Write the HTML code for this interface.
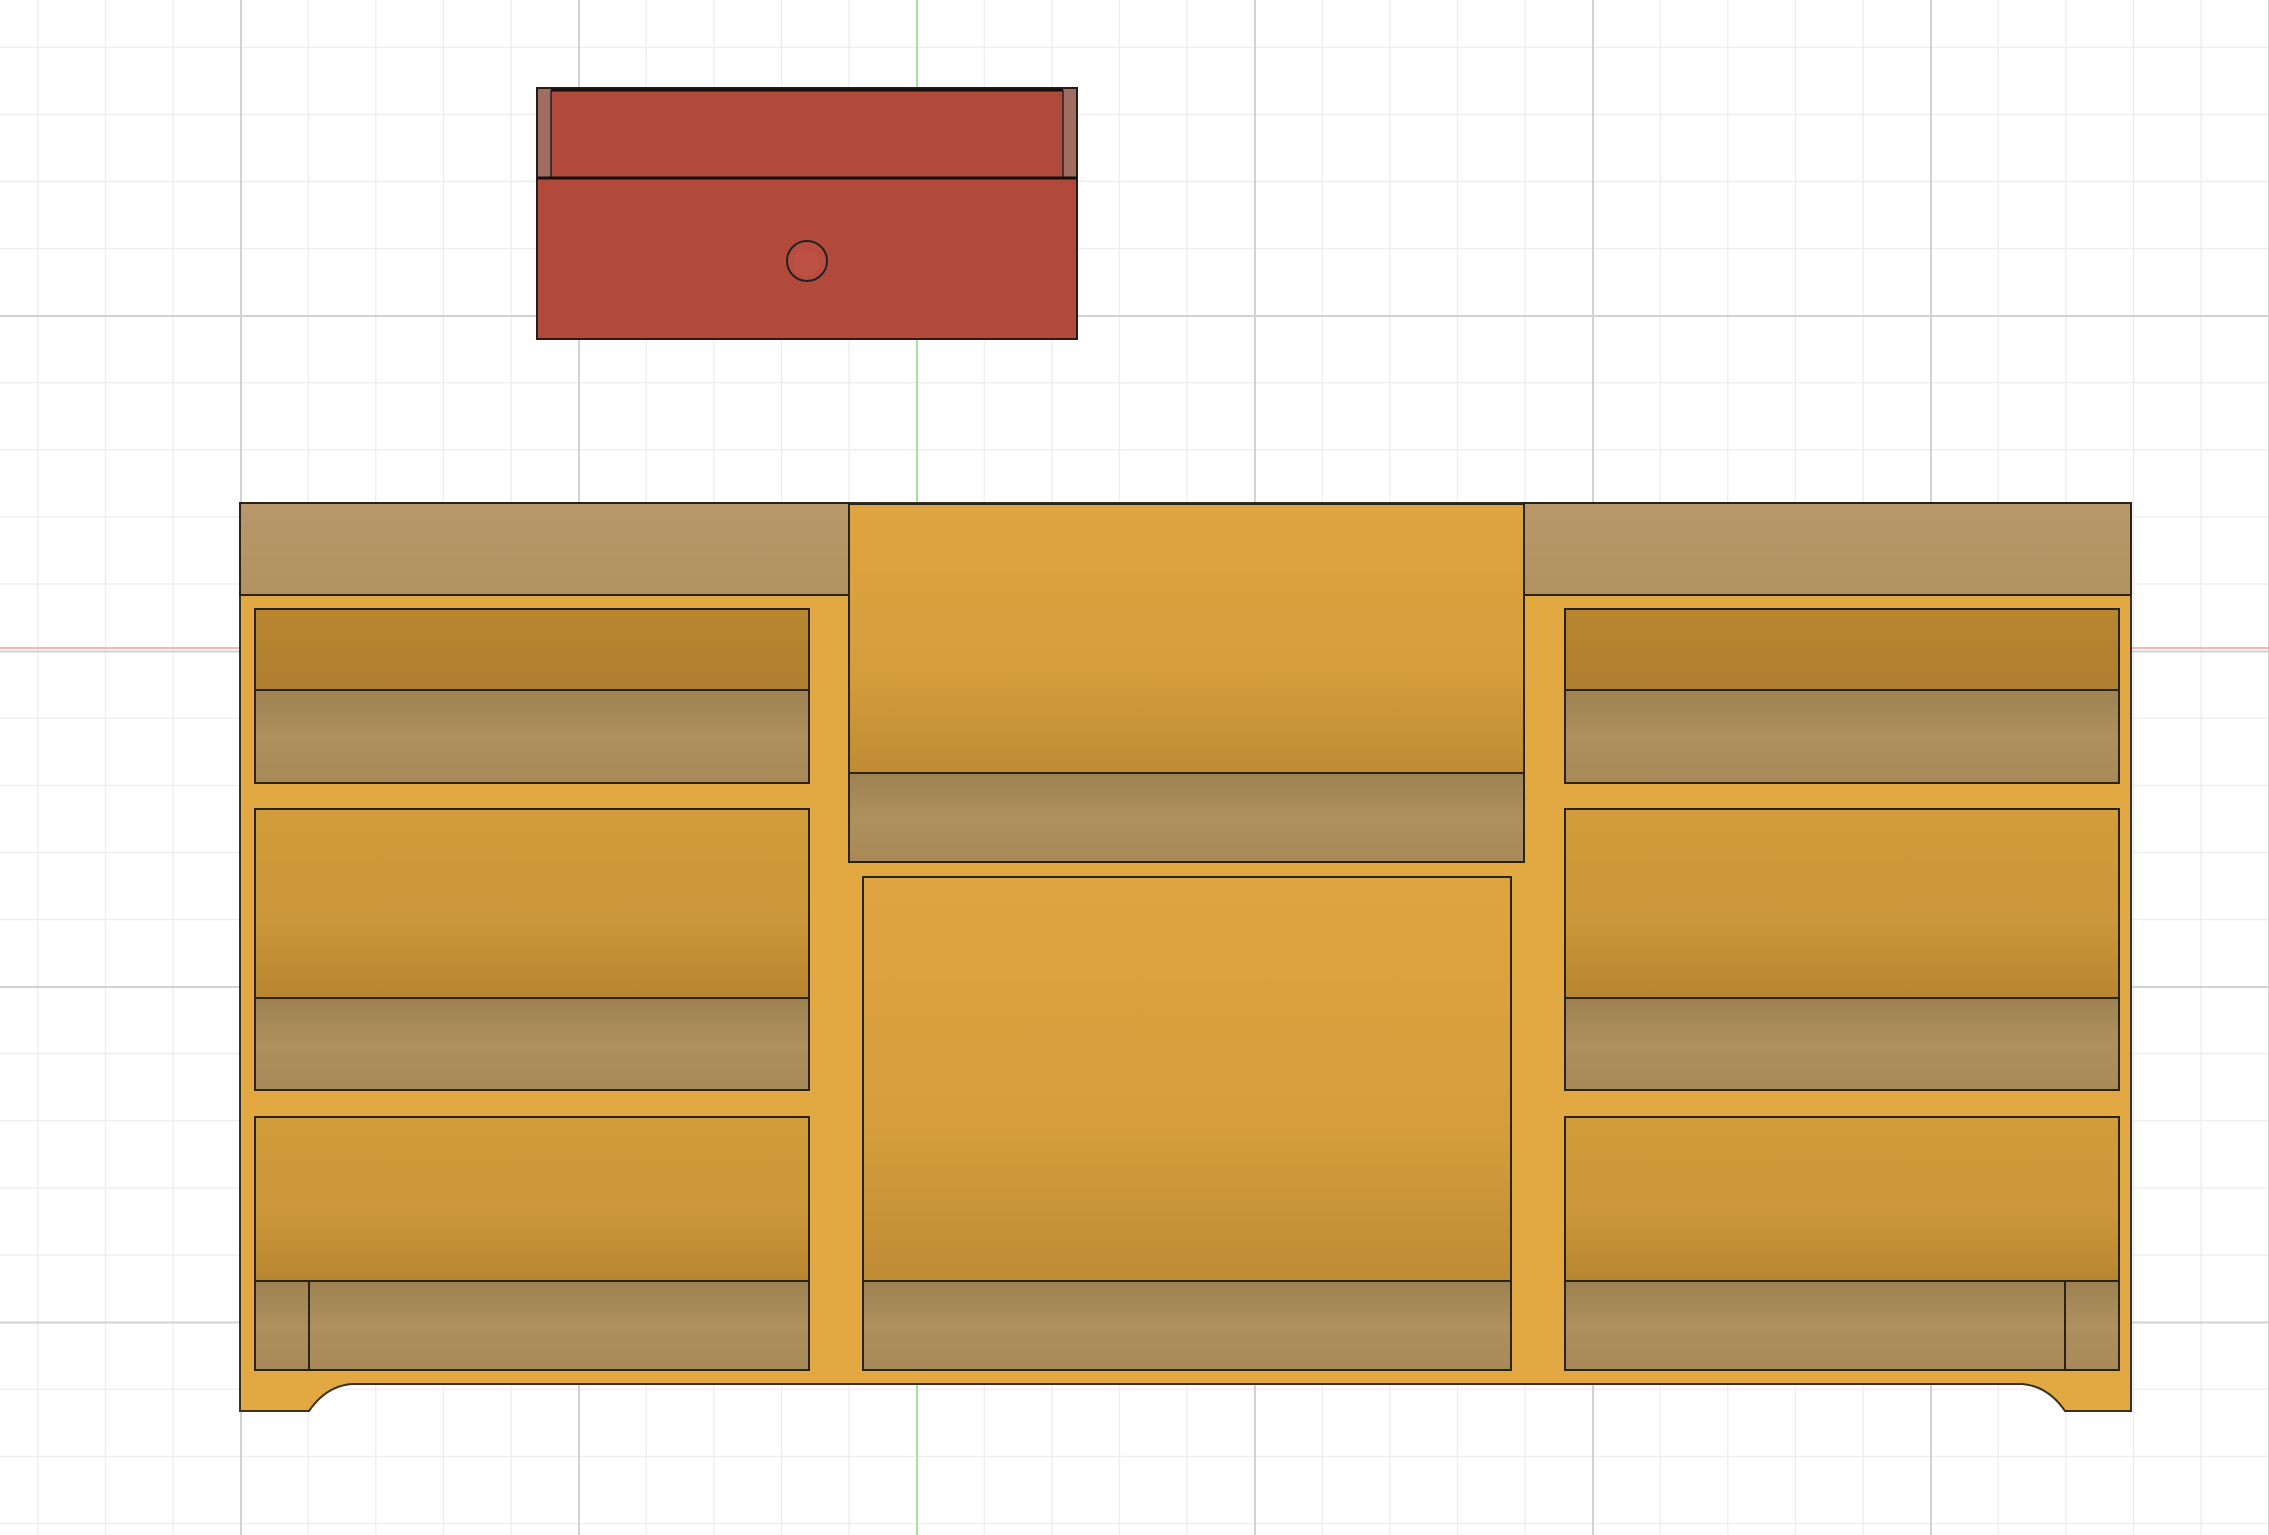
<!DOCTYPE html>
<html><head><meta charset="utf-8"><style>html,body{margin:0;padding:0;background:#fff;width:2269px;height:1535px;overflow:hidden}</style></head>
<body>
<svg width="2269" height="1535" viewBox="0 0 2269 1535" xmlns="http://www.w3.org/2000/svg">
<defs>
<pattern id="minor" patternUnits="userSpaceOnUse" x="37.2" y="46.6" width="67.6" height="67.1">
<path d="M0.5 0V67.1M0 0.5H67.6" stroke="#ececec" stroke-width="1.5" fill="none"/>
</pattern>
<pattern id="major" patternUnits="userSpaceOnUse" x="240" y="315" width="338" height="335.5">
<path d="M1 0V335.5M0 1H338" stroke="#d2d2d2" stroke-width="2" fill="none"/>
</pattern>
<linearGradient id="dk" x1="0" y1="0" x2="0" y2="1"><stop offset="0" stop-color="#b8862f"/><stop offset="1" stop-color="#ae7f30"/></linearGradient>
<linearGradient id="gd" x1="0" y1="0" x2="0" y2="1"><stop offset="0" stop-color="#d29b3b"/><stop offset="0.6" stop-color="#cc963a"/><stop offset="1" stop-color="#b8862f"/></linearGradient>
<linearGradient id="gc" x1="0" y1="0" x2="0" y2="1"><stop offset="0" stop-color="#dea43f"/><stop offset="0.6" stop-color="#d69e3d"/><stop offset="1" stop-color="#bf8b33"/></linearGradient>
<linearGradient id="tan" x1="0" y1="0" x2="0" y2="1"><stop offset="0" stop-color="#9e8252"/><stop offset="0.5" stop-color="#ae905e"/><stop offset="1" stop-color="#a88a5a"/></linearGradient>
<linearGradient id="band" x1="0" y1="0" x2="0" y2="1"><stop offset="0" stop-color="#b8986a"/><stop offset="1" stop-color="#b29262"/></linearGradient>
</defs>
<rect width="2269" height="1535" fill="#fff"/>
<rect width="2269" height="1535" fill="url(#minor)"/>
<rect width="2269" height="1535" fill="url(#major)"/>
<line x1="0" y1="648" x2="2269" y2="648" stroke="#f5b5b5" stroke-width="2"/>
<line x1="917" y1="0" x2="917" y2="1535" stroke="#9fe39f" stroke-width="2"/>

<!-- red box -->
<rect x="537" y="88" width="540" height="251" fill="#b24a3c" stroke="#2a1a18" stroke-width="2"/>
<rect x="538" y="89" width="13" height="89" fill="#a06d62"/>
<rect x="1063" y="89" width="13" height="89" fill="#a06d62"/>
<line x1="551" y1="90" x2="1063" y2="90" stroke="#111" stroke-width="3"/>
<line x1="551" y1="90" x2="551" y2="178" stroke="#222" stroke-width="1.5"/>
<line x1="1063" y1="90" x2="1063" y2="178" stroke="#222" stroke-width="1.5"/>
<line x1="537" y1="178" x2="1077" y2="178" stroke="#111" stroke-width="3"/>
<circle cx="807" cy="261" r="20" fill="#b94e40" stroke="#222" stroke-width="2"/>
<circle cx="807" cy="263" r="13" fill="#bd5244"/>

<!-- cabinet -->
<path d="M240 503H2131V1411H2065Q2048 1386 2022 1384H352Q326 1386 309 1411H240Z" fill="#e2a841" stroke="#3a3020" stroke-width="2"/>
<rect x="240" y="503" width="609" height="92" fill="url(#band)" stroke="#2a2418" stroke-width="2"/>
<rect x="1524" y="503" width="607" height="92" fill="url(#band)" stroke="#2a2418" stroke-width="2"/>

<!-- center upper -->
<rect x="849" y="504" width="675" height="269" fill="url(#gc)" stroke="#2a2418" stroke-width="2"/>
<rect x="849" y="773" width="675" height="89" fill="url(#tan)" stroke="#2a2418" stroke-width="2"/>
<!-- center lower -->
<rect x="863" y="877" width="648" height="404" fill="url(#gc)" stroke="#2a2418" stroke-width="2"/>
<rect x="863" y="1281" width="648" height="89" fill="url(#tan)" stroke="#2a2418" stroke-width="2"/>

<!-- left drawers -->
<rect x="255" y="609" width="554" height="81" fill="url(#dk)" stroke="#2a2418" stroke-width="2"/>
<rect x="255" y="690" width="554" height="93" fill="url(#tan)" stroke="#2a2418" stroke-width="2"/>
<rect x="255" y="809" width="554" height="189" fill="url(#gd)" stroke="#2a2418" stroke-width="2"/>
<rect x="255" y="998" width="554" height="92" fill="url(#tan)" stroke="#2a2418" stroke-width="2"/>
<rect x="255" y="1117" width="554" height="164" fill="url(#gd)" stroke="#2a2418" stroke-width="2"/>
<rect x="255" y="1281" width="554" height="89" fill="url(#tan)" stroke="#2a2418" stroke-width="2"/>
<line x1="309" y1="1281" x2="309" y2="1370" stroke="#2a2418" stroke-width="2"/>

<!-- right drawers -->
<rect x="1565" y="609" width="554" height="81" fill="url(#dk)" stroke="#2a2418" stroke-width="2"/>
<rect x="1565" y="690" width="554" height="93" fill="url(#tan)" stroke="#2a2418" stroke-width="2"/>
<rect x="1565" y="809" width="554" height="189" fill="url(#gd)" stroke="#2a2418" stroke-width="2"/>
<rect x="1565" y="998" width="554" height="92" fill="url(#tan)" stroke="#2a2418" stroke-width="2"/>
<rect x="1565" y="1117" width="554" height="164" fill="url(#gd)" stroke="#2a2418" stroke-width="2"/>
<rect x="1565" y="1281" width="554" height="89" fill="url(#tan)" stroke="#2a2418" stroke-width="2"/>
<line x1="2065" y1="1281" x2="2065" y2="1370" stroke="#2a2418" stroke-width="2"/>
</svg>
</body></html>
